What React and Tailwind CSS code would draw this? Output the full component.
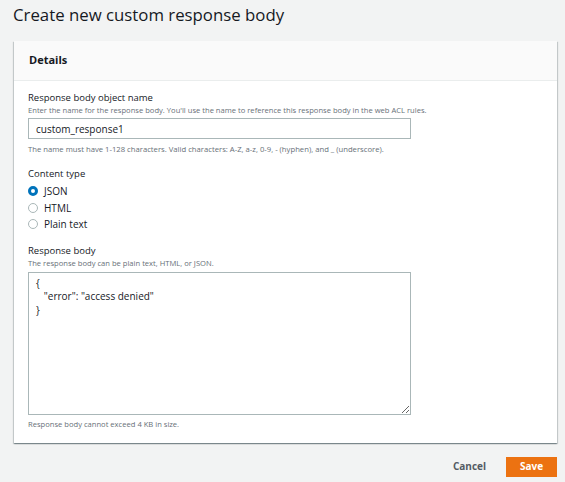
import React, { useState } from 'react';

function Radio({ label, checked, onSelect }) {
  return (
    <label className="flex items-center h-[16.5px] cursor-pointer" onClick={onSelect}>
      {checked ? (
        <span className="w-[10px] h-[10px] rounded-full border-[3px] border-[#0073bb] bg-white shrink-0" />
      ) : (
        <span className="w-[10px] h-[10px] rounded-full border border-[#aab7b8] bg-white shrink-0" />
      )}
      <span className="ml-[6px] text-[10px] leading-[16px] text-[#16191f]">{label}</span>
    </label>
  );
}

export default function App() {
  const [type, setType] = useState('json');
  const [name, setName] = useState('custom_response1');
  const [body, setBody] = useState('{\n   "error": "access denied"\n}');

  return (
    <div className="min-h-[482px] w-full bg-[#f2f3f3] pt-[3px] pl-[14px] pr-[8px] font-['Open_Sans',sans-serif] text-[#16191f]">
      <h1 className="-ml-[1px] text-[16.8px] leading-[24px] text-[#16191f]">Create new custom response body</h1>

      <div className="mt-[14px] bg-white shadow-[0_1px_1px_0_rgba(0,28,36,0.3),1px_1px_1px_0_rgba(0,28,36,0.15),-1px_1px_1px_0_rgba(0,28,36,0.15)]">
        <div className="h-[40px] flex items-center px-[15px] bg-[#fafafa] border-b border-[#eaeded]">
          <h2 className="text-[11px] font-bold">Details</h2>
        </div>

        <div className="px-[14px] pt-[10px] pb-[13px]">
          <div className="text-[9.5px] leading-[14px]">Response body object name</div>
          <div className="text-[7.6px] leading-[11px] text-[#687078]">
            Enter the name for the response body. You'll use the name to reference this response body in the web ACL rules.
          </div>
          <input
            value={name}
            onChange={e => setName(e.target.value)}
            className="mt-[2px] block w-[383px] h-[21px] px-[7px] text-[10px] border border-[#aab7b8] bg-white outline-none"
          />
          <div className="mt-[5px] text-[7.7px] leading-[11px] text-[#687078]">
            The name must have 1-128 characters. Valid characters: A-Z, a-z, 0-9, - (hyphen), and _ (underscore).
          </div>

          <div className="mt-[12px] text-[9.5px] leading-[14px]">Content type</div>
          <div className="mt-[2px] flex flex-col">
            <Radio label="JSON" checked={type === 'json'} onSelect={() => setType('json')} />
            <Radio label="HTML" checked={type === 'html'} onSelect={() => setType('html')} />
            <Radio label="Plain text" checked={type === 'text'} onSelect={() => setType('text')} />
          </div>

          <div className="mt-[11px] text-[9.5px] leading-[14px]">Response body</div>
          <div className="text-[7.6px] leading-[11px] text-[#687078]">
            The response body can be plain text, HTML, or JSON.
          </div>
          <textarea
            value={body}
            onChange={e => setBody(e.target.value)}
            className="mt-[3px] block w-[383px] h-[143px] px-[7px] py-[4px] text-[10px] leading-[13.5px] border border-[#aab7b8] bg-white outline-none resize"
          />
          <div className="mt-[4px] text-[7.6px] leading-[11px] text-[#687078]">
            Response body cannot exceed 4 KB in size.
          </div>
        </div>
      </div>

      <div className="mt-[14px] flex items-center justify-end">
        <button className="text-[10px] font-bold text-[#545b64] mr-[20px]">Cancel</button>
        <button className="w-[51px] h-[20px] bg-[#ec7211] text-white text-[10px] font-bold">Save</button>
      </div>
    </div>
  );
}
